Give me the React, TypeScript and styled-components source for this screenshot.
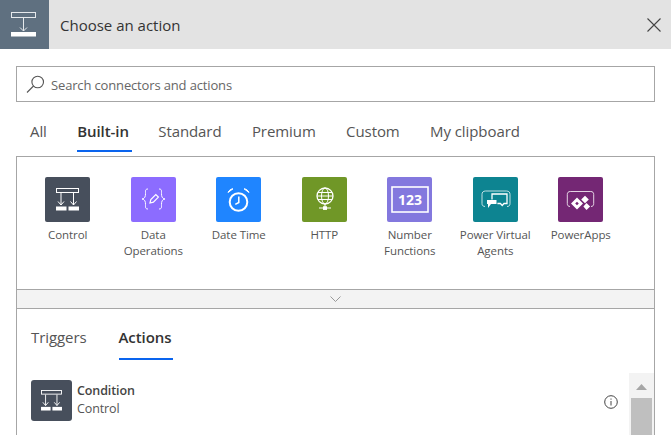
import React from "react";
import styled, { createGlobalStyle } from "styled-components";

const Global = createGlobalStyle`
  html, body { margin: 0; padding: 0; background: #fff; overflow: hidden; }
  #root { height: 435px; overflow: hidden; }
  * { box-sizing: border-box; }
`;
const Page = styled.div`
  width: 671px; height: 435px; overflow: hidden; display: flex; flex-direction: column;
  font-family: "Open Sans", "Noto Sans", sans-serif; color: #505050;
`;
const Header = styled.header`
  height: 49px; flex: none; background: #e3e3e3; display: flex; align-items: center;
`;
const HeaderIcon = styled.div`
  width: 49px; height: 49px; background: #5f7080; display: flex; align-items: center; justify-content: center;
`;
const Title = styled.h1`
  margin: 0 0 0 11px; flex: 1; font-size: 15px; font-weight: 400; color: #333; letter-spacing: 0;
`;
const Close = styled.button`
  border: 0; padding: 0; background: none; width: 14px; height: 14px; margin-right: 10px; display: flex; margin-top: 1px;
`;
const Content = styled.main`
  flex: 1; min-height: 0; padding: 17px 16px 0; display: flex; flex-direction: column;
`;
const Search = styled.div`
  height: 36px; flex: none; border: 1px solid #a6a6a6; display: flex; align-items: center; padding: 1px 0 0 9px; gap: 6px;
  font-size: 13px; color: #666; letter-spacing: -0.15px;
`;
const SearchIcon = styled.svg`
  margin-top: -1px;
`;
const Tabs = styled.nav`
  height: 50px; flex: none; display: flex; padding: 15px 0 0 14px; gap: 30.4px;
`;
const Tab = styled.div<{ $active?: boolean }>`
  height: 35px; font-size: 15px; line-height: 28px; letter-spacing: -0.08px;
  font-weight: ${p => (p.$active ? 600 : 400)};
  color: ${p => (p.$active ? "#333" : "#555")};
  border-bottom: 2px solid ${p => (p.$active ? "#0a64ee" : "transparent")};
  padding-right: ${p => (p.$active ? "3px" : "0")};
  margin-right: ${p => (p.$active ? "-4px" : "0")};
`;
const Panel = styled.section`
  margin-top: 4px; flex: 1; min-height: 0; border: 1px solid #a6a6a6; border-bottom: 0; display: flex; flex-direction: column;
`;
const Grid = styled.div`
  height: 132px; flex: none; padding: 20px 0 0 8px; display: flex; align-items: flex-start;
`;
const Connector = styled.div`
  width: 85.5px; display: flex; flex-direction: column; align-items: center; text-align: center;
  font-size: 11.5px; line-height: 16px; color: #555; letter-spacing: -0.08px;
`;
const Tile = styled.div<{ $bg: string }>`
  width: 45px; height: 45px; flex: none; border-radius: 2px; background: ${p => p.$bg};
  display: flex; margin-bottom: 5px;
`;
const Label = styled.div`
  width: 84px;
`;
const ExpandBar = styled.div`
  height: 20px; flex: none; background: #f3f3f3; border-top: 1px solid #a6a6a6; border-bottom: 1px solid #a6a6a6;
  display: flex; align-items: center; justify-content: center;
`;
const SubTabs = styled.nav`
  height: 51px; flex: none; display: flex; padding: 14px 0 0 14px; gap: 32px;
`;
const SubTab = styled(Tab)`
  height: 37px; line-height: 29px; margin-right: 0; padding-right: ${p => (p.$active ? "2px" : "0")};
`;
const ListArea = styled.div`
  margin-top: 13px; flex: 1; min-height: 0; display: flex;
`;
const List = styled.div`
  flex: 1; padding: 7px 0 0 14px;
`;
const Row = styled.div`
  display: flex; align-items: center; height: 41px;
`;
const RowTile = styled(Tile)`
  margin: 0; width: 41px; height: 41px; border-radius: 3px;
`;
const RowText = styled.div`
  flex: 1; margin-left: 5px; padding-bottom: 1px; font-size: 12.5px; line-height: 18px; letter-spacing: -0.1px; color: #555;
`;
const RowTitle = styled.div`
  font-weight: 600; color: #444;
`;
const Info = styled.span`
  display: flex; margin-right: 11px; margin-top: 3px;
`;
const Scrollbar = styled.div`
  width: 25px; flex: none; background: #f3f3f3; padding: 0 2px; display: flex; flex-direction: column; align-items: stretch;
`;
const ScrollUp = styled.div`
  height: 25px; flex: none; display: flex; justify-content: center; padding-top: 11px;
`;
const Thumb = styled.div`
  flex: 1; background: #bfbfbf;
`;

const W = "#fff";
const ControlGlyph = () => (
  <svg width="100%" height="100%" viewBox="0 0 45 45" fill="none">
    <rect x="11.500" y="11.500" width="22" height="4" stroke={W} />
    <path d="M16 16v12M28.500 16v12M13 24.500l3 3.500 3-3.500M25.500 24.500l3 3.500 3-3.500" stroke={W} />
    <rect x="11" y="29.500" width="10.500" height="4" fill={W} />
    <rect x="23.500" y="29.500" width="10.500" height="4" fill={W} />
  </svg>
);
const DataGlyph = () => (
  <svg width="45" height="45" viewBox="0 0 45 45" fill="none" stroke={W} strokeWidth="1">
    <path d="M17 12c-3 0-2.500 2-2.500 4.500 0 3-.5 5-3.500 5.500 3 .5 3.500 2.500 3.500 5.500 0 2.500-.5 4.500 2.500 4.500" />
    <path d="M28 12c3 0 2.500 2 2.500 4.500 0 3 .5 5 3.500 5.500-3 .5-3.500 2.500-3.500 5.500 0 2.500.5 4.500-2.500 4.500" />
    <path d="M19 26l.8-3.500 5-5 2.600 2.600-5 5z" strokeWidth="1.200" />
  </svg>
);
const ClockGlyph = () => (
  <svg width="45" height="45" viewBox="0 0 45 45" fill="none" stroke={W} strokeWidth="2">
    <circle cx="22.500" cy="25" r="8.800" />
    <path d="M22.800 19.500v6l-3.500 1.800" strokeWidth="1.500" />
    <path d="M12 15.500c1-2.200 2.800-3.500 5-3.700zM33 15.500c-1-2.200-2.800-3.500-5-3.700z" fill={W} strokeWidth="1" />
  </svg>
);
const GlobeGlyph = () => (
  <svg width="45" height="45" viewBox="0 0 45 45" fill="none" stroke={W} strokeWidth="1">
    <circle cx="23" cy="19" r="8" strokeWidth="1.300" />
    <ellipse cx="23" cy="19" rx="3.500" ry="8" />
    <path d="M15 19h16M16 15.500h14M16 22.500h14M23 27v4M17 31h12" />
    <rect x="21.500" y="29.800" width="3" height="2.600" fill={W} />
  </svg>
);
const NumberGlyph = () => (
  <svg width="45" height="45" viewBox="0 0 45 45" fill="none">
    <rect x="5" y="10" width="36" height="25" stroke={W} strokeWidth="1.600" />
    <text x="23" y="27.500" textAnchor="middle" fill={W} fontFamily="Open Sans" fontWeight="700" fontSize="14">123</text>
  </svg>
);
const AgentGlyph = () => (
  <svg width="45" height="45" viewBox="0 0 45 45" fill="none" stroke={W}>
    <path d="M12 29.500c-2-.2-3-1-3-3v-9c0-2 1-3.500 3.500-3.500h21c2.500 0 3.500 1.500 3.500 3.500v9c0 2-1 3-3 3" strokeOpacity=".75" />
    <path d="M19 22.500v-5.500h15v9.500h-3l-1.800 2-1.800-2h-3" strokeWidth="1.300" />
    <path d="M14 23h9.500v4h-5.500l-3 4v-4h-1z" fill={W} stroke="none" />
  </svg>
);
const AppsGlyph = () => (
  <svg width="45" height="45" viewBox="0 0 45 45" fill="none">
    <path d="M12 29.500c-2-.2-2.700-1-2.700-3v-9c0-2 1-3 3-3h20.400c2 0 3 1 3 3v9c0 2-.7 2.800-2.700 3" stroke={W} strokeOpacity=".8" />
    <path fillRule="evenodd" d="M19 20.500l6 6-6 6-6-6zM19 24.700l-1.800 1.800 1.800 1.800 1.800-1.800z" fill={W} />
    <path d="M27 18.700l3.800 3.800-3.800 3.800-3.800-3.800zM28.500 26l3.600 3.500-3.600 3.500-3.100-3.500z" fill={W} />
  </svg>
);

const connectors = [
  { name: "Control", bg: "#474f5c", glyph: <ControlGlyph /> },
  { name: "Data Operations", bg: "#8c6cff", glyph: <DataGlyph /> },
  { name: "Date Time", bg: "#1f85ff", glyph: <ClockGlyph /> },
  { name: "HTTP", bg: "#709727", glyph: <GlobeGlyph /> },
  { name: "Number Functions", bg: "#8378de", glyph: <NumberGlyph /> },
  { name: "Power Virtual Agents", bg: "#0d8491", glyph: <AgentGlyph /> },
  { name: "PowerApps", bg: "#742774", glyph: <AppsGlyph /> },
];
const tabs = ["All", "Built-in", "Standard", "Premium", "Custom", "My clipboard"];

export default function App() {
  return (
    <Page>
      <Global />
      <Header>
        <HeaderIcon>
          <svg width="49" height="49" viewBox="0 0 49 49" fill="none">
            <rect x="11.500" y="12.500" width="24" height="5" stroke="#e6e9ec" />
            <path d="M23.500 18v13M20 27.500l3.500 3.500 3.500-3.500" stroke="#e6e9ec" />
            <rect x="11" y="32" width="25" height="4.500" fill={W} />
          </svg>
        </HeaderIcon>
        <Title>Choose an action</Title>
        <Close aria-label="Close">
          <svg width="14" height="14" viewBox="0 0 14 14" stroke="#444" strokeWidth="1.100"><path d="M.5.500l13 13M13.500.500l-13 13" /></svg>
        </Close>
      </Header>
      <Content>
        <Search>
          <SearchIcon width="19" height="19" viewBox="0 0 19 19" fill="none" stroke="#555" strokeWidth="1.100">
            <circle cx="11.700" cy="7" r="5.800" /><path d="M7.500 11L1 17.500" />
          </SearchIcon>
          Search connectors and actions
        </Search>
        <Tabs>
          {tabs.map(t => <Tab key={t} $active={t === "Built-in"}>{t}</Tab>)}
        </Tabs>
        <Panel>
          <Grid>
            {connectors.map(c => (
              <Connector key={c.name}>
                <Tile $bg={c.bg}>{c.glyph}</Tile>
                <Label>{c.name}</Label>
              </Connector>
            ))}
          </Grid>
          <ExpandBar>
            <svg width="11" height="6" viewBox="0 0 11 6" fill="none" stroke="#999"><path d="M.5.500l5 5 5-5" /></svg>
          </ExpandBar>
          <SubTabs>
            <SubTab>Triggers</SubTab>
            <SubTab $active>Actions</SubTab>
          </SubTabs>
          <ListArea>
            <List>
              <Row>
                <RowTile $bg="#474f5c"><ControlGlyph /></RowTile>
                <RowText>
                  <RowTitle>Condition</RowTitle>
                  Control
                </RowText>
                <Info>
                  <svg width="14" height="14" viewBox="0 0 14 14" fill="none" stroke="#444">
                    <circle cx="7" cy="7" r="6.300" /><path d="M7 6v4.500M7 3.500v1.200" />
                  </svg>
                </Info>
              </Row>
            </List>
            <Scrollbar>
              <ScrollUp>
                <svg width="11" height="6" viewBox="0 0 11 6"><path d="M5.500 0L11 6H0z" fill="#a6a6a6" /></svg>
              </ScrollUp>
              <Thumb />
            </Scrollbar>
          </ListArea>
        </Panel>
      </Content>
    </Page>
  );
}
